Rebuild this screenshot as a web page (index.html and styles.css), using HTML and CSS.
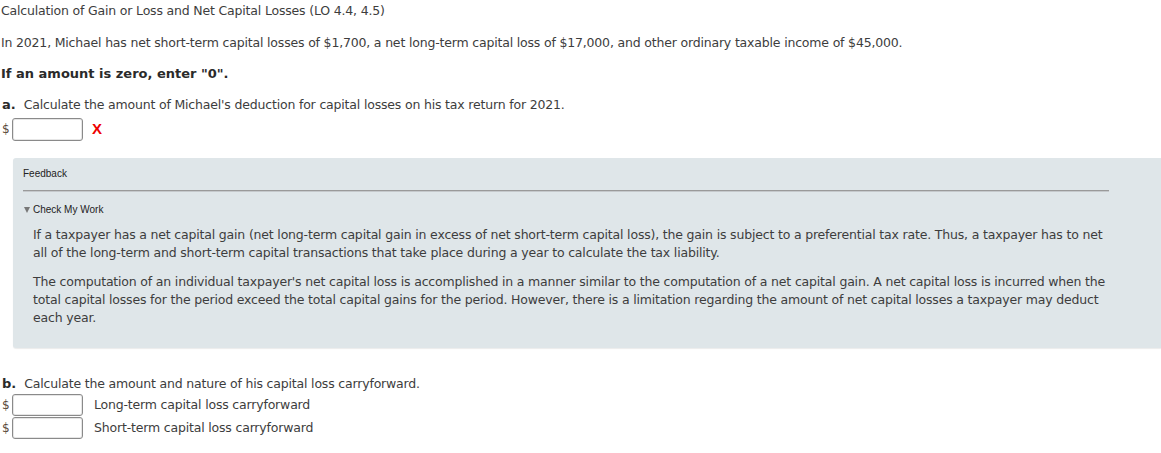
FILE: index.html
```html
<!DOCTYPE html>
<html>
<head>
<meta charset="utf-8">
<link rel="stylesheet" href="styles.css">
</head>
<body>
<div class="page">
  <p class="title">Calculation of Gain or Loss and Net Capital Losses (LO 4.4, 4.5)</p>
  <p class="intro">In 2021, Michael has net short-term capital losses of $1,700, a net long-term capital loss of $17,000, and other ordinary taxable income of $45,000.</p>
  <p class="note">If an amount is zero, enter "0".</p>

  <p class="question"><b>a.</b>Calculate the amount of Michael's deduction for capital losses on his tax return for 2021.</p>
  <div class="answer-row">
    <span class="dollar">$</span><span class="field"></span><span class="wrong">X</span>
  </div>

  <div class="feedback">
    <div class="fb-title">Feedback</div>
    <div class="fb-rule"></div>
    <div class="cmw"><span class="tri"></span>Check My Work</div>
    <div class="fb-body">
      <p>If a taxpayer has a net capital gain (net long-term capital gain in excess of net short-term capital loss), the gain is subject to a preferential tax rate. Thus, a taxpayer has to net all of the long-term and short-term capital transactions that take place during a year to calculate the tax liability.</p>
      <p>The computation of an individual taxpayer's net capital loss is accomplished in a manner similar to the computation of a net capital gain. A net capital loss is incurred when the total capital losses for the period exceed the total capital gains for the period. However, there is a limitation regarding the amount of net capital losses a taxpayer may deduct each year.</p>
    </div>
  </div>

  <p class="question qb"><b>b.</b>Calculate the amount and nature of his capital loss carryforward.</p>
  <div class="answer-row tight">
    <span class="dollar">$</span><span class="field"></span><span class="label">Long-term capital loss carryforward</span>
  </div>
  <div class="answer-row tight">
    <span class="dollar">$</span><span class="field"></span><span class="label">Short-term capital loss carryforward</span>
  </div>
</div>
</body>
</html>
```

FILE: styles.css
```css
html, body {
  margin: 0;
  padding: 0;
  background: #fff;
}
.page {
  padding: 2px 0 0 1px;
  font-family: Verdana, "DejaVu Sans", sans-serif;
  font-size: 12.5px;
  letter-spacing: -0.18px;
  line-height: 18px;
  color: #3d3d3d;
  overflow: hidden;
}
p { margin: 0; }
.intro { margin-top: 14px; }
.note {
  margin-top: 13px;
  font-weight: bold;
  font-size: 13px;
  letter-spacing: 0;
  color: #2a2a2a;
}
.question { margin-top: 13px; }
.question b {
  color: #2a2a2a;
  font-size: 13px;
  letter-spacing: 0;
  margin: 0 8px 0 1px;
}
.answer-row {
  display: flex;
  align-items: center;
  margin-top: 3px;
  height: 24px;
}
.dollar {
  font-size: 12px;
  width: 10px;
  color: #5a4a3a;
  padding-left: 1px;
  letter-spacing: 0;
}
.field {
  display: block;
  width: 69px;
  height: 21px;
  border: 1px solid #8a8a8a;
  border-radius: 3px;
  background: #fff;
  box-shadow: inset 0 0 0 1px #e6e6e6;
}
.wrong {
  margin-left: 9px;
  color: #ee0000;
  font-family: "Liberation Sans", Arial, sans-serif;
  font-weight: bold;
  font-size: 15px;
}
.feedback {
  margin: 17px 0 0 12px;
  background: #dfe6e9;
  border-radius: 3px 0 0 3px;
  box-shadow: 0 1px 1px rgba(0,0,0,0.08);
  padding: 9px 0 21px 10px;
}
.fb-title {
  font-family: "Liberation Sans", Arial, sans-serif;
  font-size: 10px;
  letter-spacing: 0;
  line-height: 14px;
  color: #222;
}
.fb-rule {
  width: 1086px;
  height: 1px;
  background: #9a9a9a;
  margin-top: 9px;
  border-bottom: 1px solid #c5c9cc;
}
.cmw {
  margin-top: 11px;
  font-family: "Liberation Sans", Arial, sans-serif;
  font-size: 10px;
  letter-spacing: 0;
  line-height: 14px;
  color: #222;
  display: flex;
  align-items: center;
}
.tri {
  width: 0;
  height: 0;
  border-left: 3px solid transparent;
  border-right: 3px solid transparent;
  border-top: 6px solid #777;
  margin: 0 3px 0 1px;
}
.fb-body {
  padding: 9px 50px 0 10px;
}
.fb-body p + p { margin-top: 11px; }
.qb { margin-top: 27px; }
.tight { margin-top: 0; height: 23px; }
.tight .field { height: 20px; }
.label { margin-left: 11px; }
```
